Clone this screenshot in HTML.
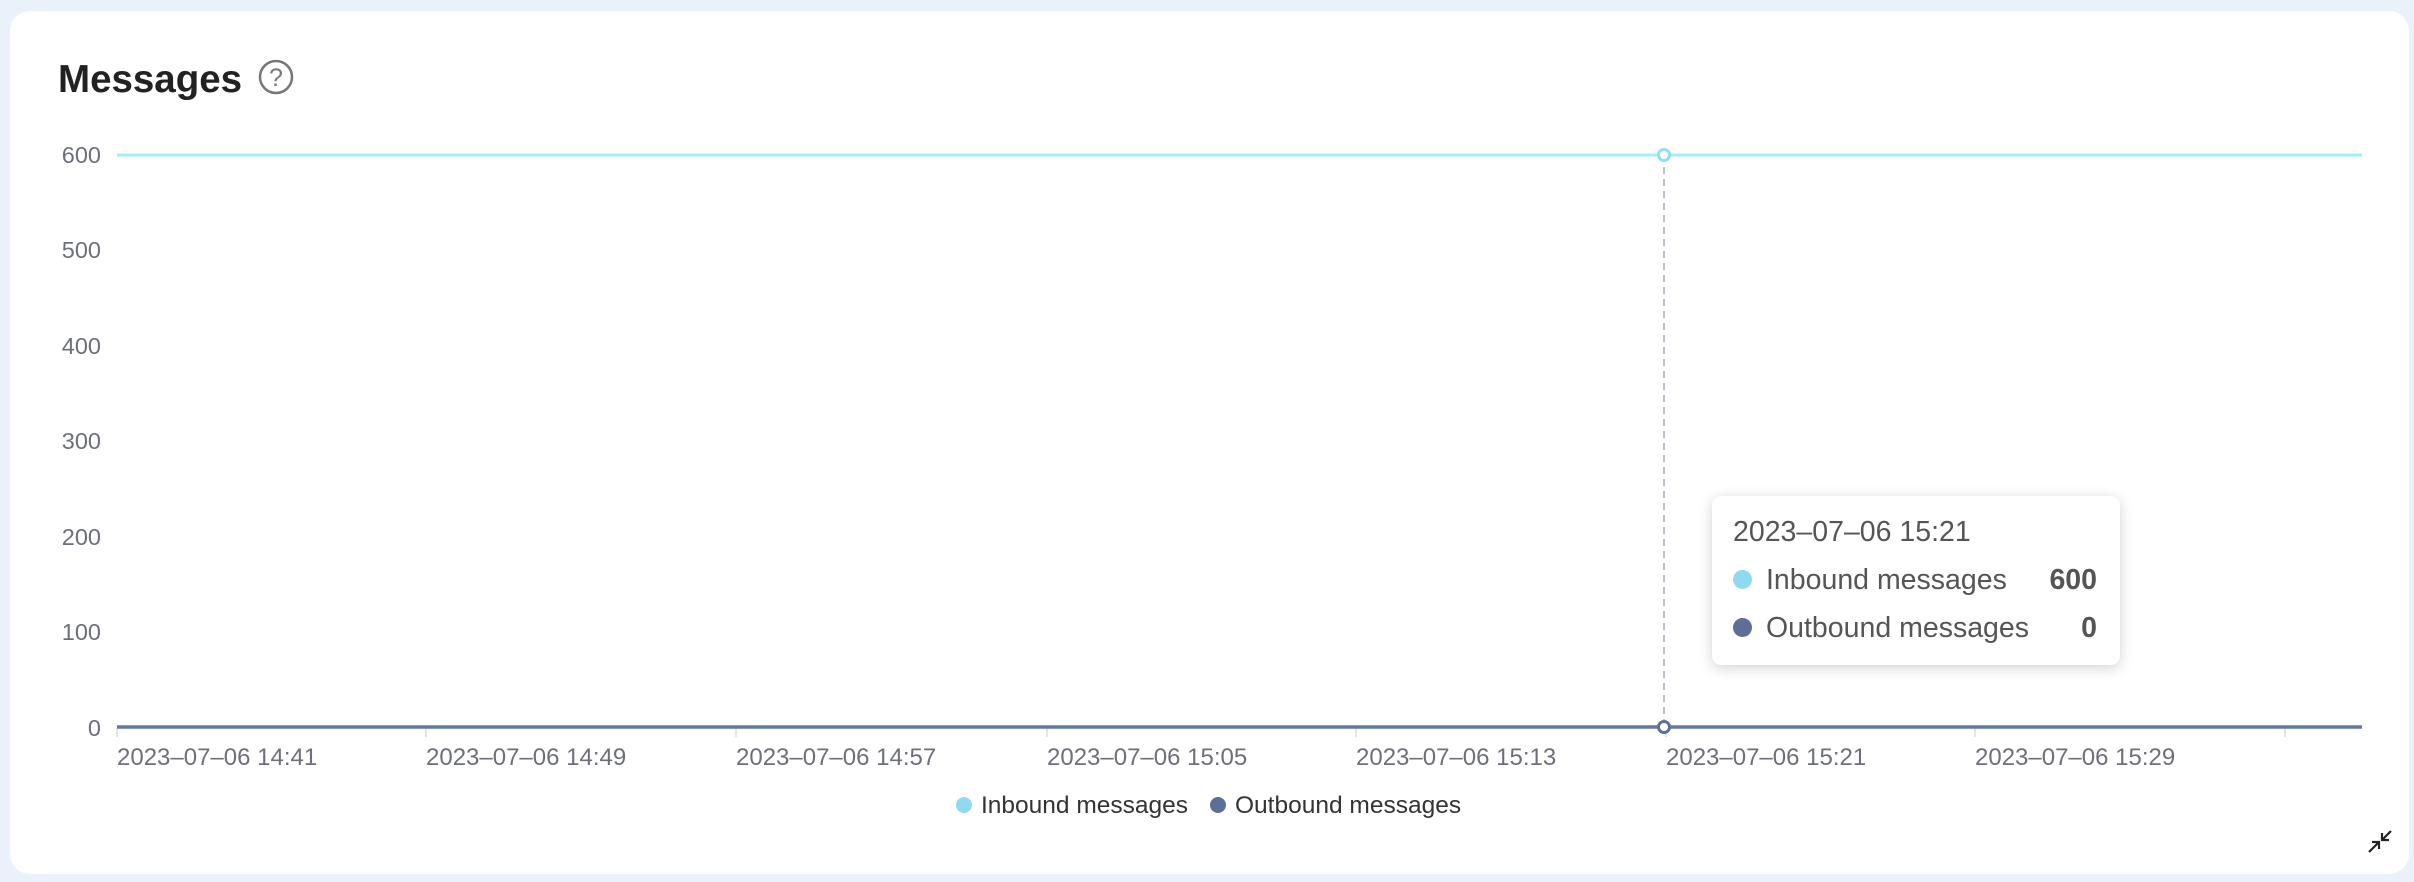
<!DOCTYPE html>
<html><head><meta charset="utf-8"><style>
html,body{margin:0;padding:0;width:2414px;height:882px;background:#eaf1fb;overflow:hidden;font-family:"Liberation Sans",Helvetica,Arial,sans-serif}
.card{position:absolute;left:10px;top:11px;width:2399px;height:863px;background:#fff;border-radius:20px}
.tt{position:absolute;left:1712px;top:496px;width:408px;height:169px;background:#fff;border-radius:9px;box-shadow:0 3px 14px rgba(0,0,0,0.18);font-size:28.5px;color:#555}
</style></head><body>
<div class="card"></div>
<svg width="2414" height="882" style="position:absolute;left:0;top:0" font-family="Liberation Sans, Helvetica, Arial, sans-serif">
  <text x="58" y="92" font-size="38.5" font-weight="bold" fill="#222">Messages</text>
  <circle cx="276" cy="77" r="16" fill="none" stroke="#777" stroke-width="2.5"/>
  <text x="276" y="86" font-size="25" fill="#777" text-anchor="middle">?</text>
  <g font-size="23.5" fill="#6e7079" text-anchor="end">
    <text x="101" y="163">600</text>
    <text x="101" y="258">500</text>
    <text x="101" y="354">400</text>
    <text x="101" y="449">300</text>
    <text x="101" y="545">200</text>
    <text x="101" y="640">100</text>
    <text x="101" y="736">0</text>
  </g>
  <g stroke="#e0e6f1" stroke-width="2">
    <line x1="117" y1="728" x2="117" y2="737"/><line x1="426" y1="728" x2="426" y2="737"/><line x1="736" y1="728" x2="736" y2="737"/><line x1="1047" y1="728" x2="1047" y2="737"/><line x1="1356" y1="728" x2="1356" y2="737"/><line x1="1666" y1="728" x2="1666" y2="737"/><line x1="1975" y1="728" x2="1975" y2="737"/><line x1="2285" y1="728" x2="2285" y2="737"/>
  </g>
  <g font-size="24" fill="#6e7079">
    <text x="117" y="765">2023–07–06 14:41</text>
    <text x="426" y="765">2023–07–06 14:49</text>
    <text x="736" y="765">2023–07–06 14:57</text>
    <text x="1047" y="765">2023–07–06 15:05</text>
    <text x="1356" y="765">2023–07–06 15:13</text>
    <text x="1666" y="765">2023–07–06 15:21</text>
    <text x="1975" y="765">2023–07–06 15:29</text>
  </g>
  <line x1="1664" y1="155" x2="1664" y2="727" stroke="#aab" stroke-width="1.5" stroke-dasharray="7,5"/>
  <line x1="117" y1="155" x2="2362" y2="155" stroke="#a0f0f8" stroke-width="3"/>
  <line x1="117" y1="727" x2="2362" y2="727" stroke="#6478a6" stroke-width="3.5"/>
  <circle cx="1664" cy="155" r="5.5" fill="#fff" stroke="#8fe0ef" stroke-width="3"/>
  <circle cx="1664" cy="727" r="5.5" fill="#fff" stroke="#5d6f9c" stroke-width="3"/>
  <circle cx="964" cy="805" r="8" fill="#8fdaf0"/>
  <text x="981" y="813" font-size="24.5" fill="#333">Inbound messages</text>
  <circle cx="1218" cy="805" r="8" fill="#5f6e98"/>
  <text x="1235" y="813" font-size="24.5" fill="#333">Outbound messages</text>
  <g stroke="#222" stroke-width="2.2" fill="none">
    <path d="M2369 852 L2379 842 M2372 842 L2379 842 L2379 849"/>
    <path d="M2391 831 L2382 840 M2382 833 L2382 840 L2389 840"/>
  </g>
</svg>
<div class="tt">
  <div style="position:absolute;left:21px;top:20px">2023–07–06 15:21</div>
  <div style="position:absolute;left:21px;top:74px;width:19px;height:19px;border-radius:50%;background:#8fdaf0"></div>
  <div style="position:absolute;left:54px;top:68px">Inbound messages</div>
  <div style="position:absolute;right:23px;top:68px;font-weight:bold">600</div>
  <div style="position:absolute;left:21px;top:122px;width:19px;height:19px;border-radius:50%;background:#5f6e98"></div>
  <div style="position:absolute;left:54px;top:116px">Outbound messages</div>
  <div style="position:absolute;right:23px;top:116px;font-weight:bold">0</div>
</div>
</body></html>
